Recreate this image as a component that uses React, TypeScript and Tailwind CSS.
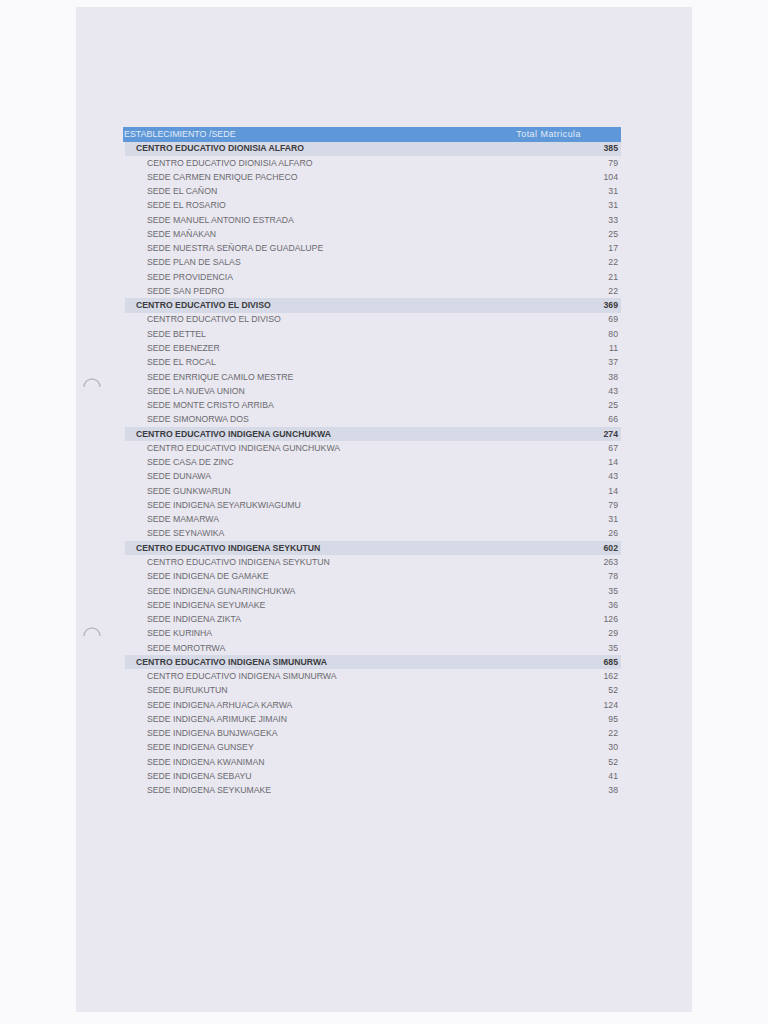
type Sede = [string, number];
type Grupo = { nombre: string; total: number; sedes: Sede[] };

const grupos: Grupo[] = [
  {
    nombre: "CENTRO EDUCATIVO DIONISIA ALFARO",
    total: 385,
    sedes: [
      ["CENTRO EDUCATIVO DIONISIA ALFARO", 79],
      ["SEDE CARMEN ENRIQUE PACHECO", 104],
      ["SEDE EL CAÑON", 31],
      ["SEDE EL ROSARIO", 31],
      ["SEDE MANUEL ANTONIO ESTRADA", 33],
      ["SEDE MAÑAKAN", 25],
      ["SEDE NUESTRA SEÑORA DE GUADALUPE", 17],
      ["SEDE PLAN DE SALAS", 22],
      ["SEDE PROVIDENCIA", 21],
      ["SEDE SAN PEDRO", 22],
    ],
  },
  {
    nombre: "CENTRO EDUCATIVO EL DIVISO",
    total: 369,
    sedes: [
      ["CENTRO EDUCATIVO EL DIVISO", 69],
      ["SEDE BETTEL", 80],
      ["SEDE EBENEZER", 11],
      ["SEDE EL ROCAL", 37],
      ["SEDE ENRRIQUE CAMILO MESTRE", 38],
      ["SEDE LA NUEVA UNION", 43],
      ["SEDE MONTE CRISTO ARRIBA", 25],
      ["SEDE SIMONORWA DOS", 66],
    ],
  },
  {
    nombre: "CENTRO EDUCATIVO INDIGENA GUNCHUKWA",
    total: 274,
    sedes: [
      ["CENTRO EDUCATIVO INDIGENA GUNCHUKWA", 67],
      ["SEDE CASA DE ZINC", 14],
      ["SEDE DUNAWA", 43],
      ["SEDE GUNKWARUN", 14],
      ["SEDE INDIGENA SEYARUKWIAGUMU", 79],
      ["SEDE MAMARWA", 31],
      ["SEDE SEYNAWIKA", 26],
    ],
  },
  {
    nombre: "CENTRO EDUCATIVO INDIGENA SEYKUTUN",
    total: 602,
    sedes: [
      ["CENTRO EDUCATIVO INDIGENA SEYKUTUN", 263],
      ["SEDE INDIGENA DE GAMAKE", 78],
      ["SEDE INDIGENA GUNARINCHUKWA", 35],
      ["SEDE INDIGENA SEYUMAKE", 36],
      ["SEDE INDIGENA ZIKTA", 126],
      ["SEDE KURINHA", 29],
      ["SEDE MOROTRWA", 35],
    ],
  },
  {
    nombre: "CENTRO EDUCATIVO INDIGENA SIMUNURWA",
    total: 685,
    sedes: [
      ["CENTRO EDUCATIVO INDIGENA SIMUNURWA", 162],
      ["SEDE BURUKUTUN", 52],
      ["SEDE INDIGENA ARHUACA KARWA", 124],
      ["SEDE INDIGENA ARIMUKE JIMAIN", 95],
      ["SEDE INDIGENA BUNJWAGEKA", 22],
      ["SEDE INDIGENA GUNSEY", 30],
      ["SEDE INDIGENA KWANIMAN", 52],
      ["SEDE INDIGENA SEBAYU", 41],
      ["SEDE INDIGENA SEYKUMAKE", 38],
    ],
  },
];

function Perforacion({ top }: { top: string }) {
  return (
    <svg
      className={`absolute left-[6px] ${top}`}
      width="20"
      height="16"
      viewBox="0 0 20 16"
    >
      <path
        d="M2 12 A8 8 0 0 1 18 12"
        fill="none"
        stroke="#b9b9bf"
        strokeWidth="1.4"
      />
    </svg>
  );
}

export default function App() {
  return (
    <div className="min-h-[1024px] w-[768px] bg-[#fafafc] pt-[7px] font-['Liberation_Sans',Arial,sans-serif]">
      <div className="relative ml-[76px] h-[1005px] w-[616px] bg-[#e9e7ef] pt-[120px] pl-[47px]">
        <Perforacion top="top-[368px]" />
        <Perforacion top="top-[617px]" />

        <div className="w-[498px] text-[8.7px] leading-none">
          <div className="flex h-[14.5px] items-center justify-between bg-[#5f98d8] pl-[1px] pr-[40px] text-[8.9px] text-[#e2ebf7]">
            <span>ESTABLECIMIENTO /SEDE</span>
            <span className="tracking-[0.5px]">Total Matricula</span>
          </div>

          {grupos.map((g) => (
            <div key={g.nombre}>
              <div className="ml-[2px] flex h-[14.27px] items-center justify-between bg-[#d6dae6] pl-[11px] pr-[3px] font-bold text-[#3b3b40]">
                <span>{g.nombre}</span>
                <span>{g.total}</span>
              </div>
              {g.sedes.map(([nombre, n]) => (
                <div
                  key={nombre}
                  className="flex h-[14.27px] items-center justify-between pl-[24px] pr-[3px] text-[#6a6a70]"
                >
                  <span>{nombre}</span>
                  <span>{n}</span>
                </div>
              ))}
            </div>
          ))}
        </div>
      </div>
    </div>
  );
}
